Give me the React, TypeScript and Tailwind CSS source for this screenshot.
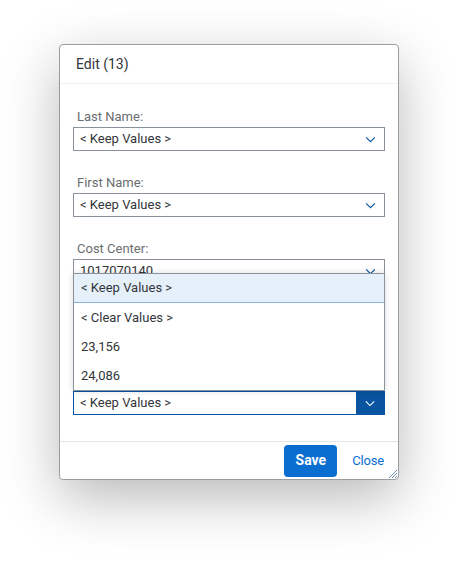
import { ReactNode } from 'react';

const font = { fontFamily: 'Roboto, "Liberation Sans", Arial, sans-serif' };

function Chevron({ className }: { className?: string }) {
  return (
    <svg viewBox="0 0 12 8" className={className} fill="none" stroke="currentColor" strokeWidth="1.3">
      <path d="M1 1.5 L6 6.5 L11 1.5" />
    </svg>
  );
}

function Field({ label, value, active }: { label: string; value: string; active?: boolean }) {
  return (
    <div className="flex flex-col">
      <label className="h-4 pl-1 text-[13px] leading-4 text-[#6a6d70]">{label}</label>
      <div
        className={`mt-[2px] flex h-6 items-center overflow-hidden border bg-white ${
          active ? 'border-[#0854a0]' : 'border-[#89919a]'
        }`}
      >
        <span className="flex-1 truncate pl-[6px] text-[13px] text-[#32363a]">{value}</span>
        {active ? (
          <span className="flex h-full w-7 items-center justify-center bg-[#0854a0] text-white">
            <Chevron className="h-[7px] w-[10px]" />
          </span>
        ) : (
          <span className="flex h-full w-7 items-center justify-center text-[#0854a0]">
            <Chevron className="h-[7px] w-[11px]" />
          </span>
        )}
      </div>
    </div>
  );
}

function Option({ children, selected }: { children: ReactNode; selected?: boolean }) {
  return (
    <div
      className={`flex h-[29px] items-center pl-[7px] text-[13px] text-[#32363a] ${
        selected ? 'border-b border-[#0854a0]/40 bg-[#e5f0fa]' : ''
      }`}
    >
      {children}
    </div>
  );
}

export default function App() {
  return (
    <div className="min-h-[570px] bg-white pl-[59px] pt-[44px]" style={font}>
      <div className="relative flex w-[340px] flex-col rounded-[4px] border border-[#9a9ea3] bg-white shadow-[0_18px_55px_rgba(0,0,0,0.28)]">
        {/* header */}
        <div className="flex h-[39px] items-center border-b border-[#f0f1f2] pl-[16px] text-[14px] text-[#32363a]">
          Edit (13)
        </div>

        {/* body */}
        <div className="relative flex flex-col gap-[24px] px-[13px] pb-[26px] pt-[25px]">
          <Field label="Last Name:" value="< Keep Values >" />
          <Field label="First Name:" value="< Keep Values >" />
          <Field label="Cost Center:" value="1017070140" />
          {/* these two sit under the open list */}
          <Field label="" value="" />
          <Field label="" value="< Keep Values >" active />

          {/* dropdown list opened upward */}
          <div className="absolute bottom-[50px] left-[13px] right-[13px] flex flex-col rounded-t-[2px] border border-[#89919a] bg-white shadow-[0_0_6px_rgba(0,0,0,0.15)]">
            <Option selected>{'< Keep Values >'}</Option>
            <Option>{'< Clear Values >'}</Option>
            <Option>23,156</Option>
            <Option>24,086</Option>
          </div>
        </div>

        {/* footer */}
        <div className="flex h-[38px] items-center justify-end gap-[15px] border-t border-[#e5e5e5] pr-[14px]">
          <button className="h-[32px] w-[53px] rounded-[4px] bg-[#0a6ed1] text-[14px] font-bold text-white">
            Save
          </button>
          <button className="text-[13px] tracking-[-0.2px] text-[#0a6ed1]">Close</button>
        </div>

        {/* resize grip */}
        <svg className="absolute bottom-[1px] right-[1px] h-[8px] w-[8px] text-[#6f8fb0]" viewBox="0 0 8 8" stroke="currentColor" strokeWidth="1">
          <path d="M8 0 L0 8 M8 3 L3 8 M8 6 L6 8" />
        </svg>
      </div>
    </div>
  );
}
